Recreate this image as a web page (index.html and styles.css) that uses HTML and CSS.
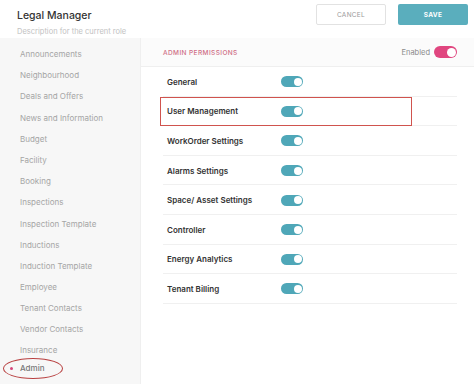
FILE: index.html
```html
<!DOCTYPE html>
<html lang="en">
<head>
  <meta charset="UTF-8">
  <title>Role Permissions</title>
  <link rel="stylesheet" href="styles.css">
</head>
<body>
  <div class="page">
    <div class="topbar">
      <div class="role">
        <div class="role-name">Legal Manager</div>
        <div class="role-desc">Description for the current role</div>
      </div>
      <div class="actions">
        <button class="btn btn-cancel">CANCEL</button>
        <button class="btn btn-save">SAVE</button>
      </div>
    </div>
    <div class="main">
      <ul class="sidebar">
        <li>Announcements</li>
        <li>Neighbourhood</li>
        <li>Deals and Offers</li>
        <li>News and Information</li>
        <li>Budget</li>
        <li>Facility</li>
        <li>Booking</li>
        <li>Inspections</li>
        <li>Inspection Template</li>
        <li>Inductions</li>
        <li>Induction Template</li>
        <li>Employee</li>
        <li>Tenant Contacts</li>
        <li>Vendor Contacts</li>
        <li class="short">Insurance</li>
        <li class="short active"><span class="dot"></span>Admin<span class="circle"></span></li>
      </ul>
      <div class="panel">
        <div class="panel-head">
          <span class="panel-title">ADMIN PERMISSIONS</span>
          <span class="enabled">Enabled <span class="toggle pink"></span></span>
        </div>
        <div class="rows">
          <div class="row"><span class="label">General</span><span class="toggle"></span></div>
          <div class="row marked"><span class="label">User Management</span><span class="toggle"></span><span class="mark"></span></div>
          <div class="row"><span class="label">WorkOrder Settings</span><span class="toggle"></span></div>
          <div class="row"><span class="label">Alarms Settings</span><span class="toggle"></span></div>
          <div class="row"><span class="label">Space/ Asset Settings</span><span class="toggle"></span></div>
          <div class="row"><span class="label">Controller</span><span class="toggle"></span></div>
          <div class="row"><span class="label">Energy Analytics</span><span class="toggle"></span></div>
          <div class="row"><span class="label">Tenant Billing</span><span class="toggle"></span></div>
        </div>
      </div>
    </div>
  </div>
</body>
</html>
```

FILE: styles.css
```css
body {
  margin: 0;
  font-family: Inter, "Liberation Sans", sans-serif;
  background-color: #fff;
  color: #333;
}
.page {
  width: 474px;
  height: 384px;
  overflow: hidden;
  display: flex;
  flex-direction: column;
}
.topbar {
  height: 38px;
  display: flex;
  justify-content: space-between;
  align-items: flex-start;
}
.role {
  padding: 9px 0 0 17px;
}
.role-name {
  font-size: 10.5px;
  font-weight: 500;
  color: #333;
  line-height: 14px;
}
.role-desc {
  font-size: 7.5px;
  color: #c2c2c2;
  margin-top: 4px;
}
.actions {
  display: flex;
  gap: 12px;
  padding: 4px 6px 0 0;
}
.btn {
  width: 70px;
  height: 21px;
  border-radius: 2px;
  font-family: inherit;
  font-size: 6.5px;
  letter-spacing: 0.3px;
  cursor: pointer;
}
.btn-cancel {
  background-color: #fff;
  border: 1px solid #e2e2e2;
  color: #999;
}
.btn-save {
  background-color: #5aaebd;
  border: none;
  color: #fff;
  font-weight: 700;
}
.main {
  flex: 1;
  display: grid;
  grid-template-columns: 140px 1fr;
}
.sidebar {
  list-style: none;
  margin: 0;
  padding: 6px 0 0;
  background-color: #f7f7f7;
}
.sidebar li {
  position: relative;
  height: 21.2px;
  line-height: 21.2px;
  padding-left: 20px;
  font-size: 8px;
  color: #a5a5a5;
}
.sidebar li.short {
  height: 18.6px;
  line-height: 18.6px;
}
.sidebar li.active {
  color: #777;
  font-weight: 500;
}
.dot {
  position: absolute;
  left: 10px;
  top: 8px;
  width: 3px;
  height: 3px;
  border-radius: 50%;
  background-color: #d6467a;
}
.circle {
  position: absolute;
  left: 3px;
  top: -1px;
  width: 58px;
  height: 19px;
  border: 1px solid #b84040;
  border-radius: 50%;
}
.panel {
  border-left: 1px solid #efefef;
}
.panel-head {
  height: 28px;
  display: flex;
  justify-content: space-between;
  align-items: center;
  padding: 0 17px 0 22px;
  background-color: #fbfbfb;
  border-bottom: 1px solid #efefef;
}
.panel-title {
  font-size: 6.5px;
  font-weight: 500;
  letter-spacing: 0.4px;
  color: #cf6f86;
  padding-top: 1px;
}
.enabled {
  display: flex;
  align-items: center;
  gap: 4px;
  font-size: 7.5px;
  color: #8a8a8a;
}
.rows {
  margin: 0 17px 0 22px;
}
.row {
  position: relative;
  height: 29.6px;
  display: flex;
  align-items: center;
  padding: 1px 0 0 4px;
  border-bottom: 1px solid #f0f0f0;
  box-sizing: border-box;
}
.label {
  width: 114px;
  font-size: 8px;
  font-weight: 600;
  color: #333;
}
.toggle {
  position: relative;
  display: inline-block;
  width: 22px;
  height: 11px;
  border-radius: 6px;
  background-color: #4fa7b8;
}
.toggle::after {
  content: "";
  position: absolute;
  right: 1.5px;
  top: 1.5px;
  width: 8px;
  height: 8px;
  border-radius: 50%;
  background-color: #fff;
}
.toggle.pink {
  width: 23px;
  height: 12px;
  background-color: #e0467f;
}
.toggle.pink::after {
  width: 9px;
  height: 9px;
}
.mark {
  position: absolute;
  left: -3px;
  top: 0;
  width: 250px;
  height: 27px;
  border: 1px solid #d0534e;
}
```
